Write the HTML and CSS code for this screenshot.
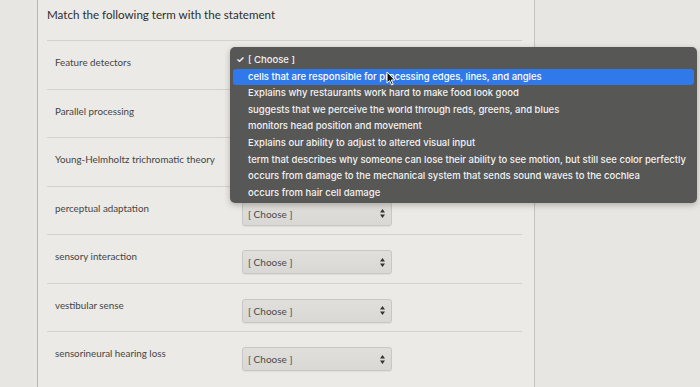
FILE: index.html
```html
<!DOCTYPE html>
<html lang="en">
<head>
  <meta charset="UTF-8" />
  <meta name="viewport" content="width=device-width, initial-scale=1.0" />
  <title>Matching question</title>
  <link rel="stylesheet" href="styles.css">
</head>
<body>
  <div class="quiz">
    <div class="question-text">Match the following term with the statement</div>

    <div class="answers">
      <div class="answer">
        <span class="term">Feature detectors</span>
        <span class="select covered">[ Choose ]</span>
      </div>
      <div class="answer">
        <span class="term">Parallel processing</span>
        <span class="select covered">[ Choose ]</span>
      </div>
      <div class="answer">
        <span class="term">Young-Helmholtz trichromatic theory</span>
        <span class="select covered">[ Choose ]</span>
      </div>
      <div class="answer">
        <span class="term">perceptual adaptation</span>
        <span class="select">[ Choose ]
          <svg class="arrows" width="5" height="9" viewBox="0 0 5 9"><path d="M2.5 0 L5 3.5 L0 3.5 Z M2.5 9 L5 5.5 L0 5.5 Z" fill="#333"/></svg>
        </span>
      </div>
      <div class="answer">
        <span class="term">sensory interaction</span>
        <span class="select">[ Choose ]
          <svg class="arrows" width="5" height="9" viewBox="0 0 5 9"><path d="M2.5 0 L5 3.5 L0 3.5 Z M2.5 9 L5 5.5 L0 5.5 Z" fill="#333"/></svg>
        </span>
      </div>
      <div class="answer">
        <span class="term">vestibular sense</span>
        <span class="select">[ Choose ]
          <svg class="arrows" width="5" height="9" viewBox="0 0 5 9"><path d="M2.5 0 L5 3.5 L0 3.5 Z M2.5 9 L5 5.5 L0 5.5 Z" fill="#333"/></svg>
        </span>
      </div>
      <div class="answer">
        <span class="term">sensorineural hearing loss</span>
        <span class="select">[ Choose ]
          <svg class="arrows" width="5" height="9" viewBox="0 0 5 9"><path d="M2.5 0 L5 3.5 L0 3.5 Z M2.5 9 L5 5.5 L0 5.5 Z" fill="#333"/></svg>
        </span>
      </div>
    </div>
  </div>

  <!-- open native dropdown for the first select -->
  <ul class="menu">
    <li class="checked"><span class="check">&#10003;</span>[ Choose ]</li>
    <li class="active">cells that are responsible for processing edges, lines, and angles</li>
    <li>Explains why restaurants work hard to make food look good</li>
    <li>suggests that we perceive the world through reds, greens, and blues</li>
    <li>monitors head position and movement</li>
    <li>Explains our ability to adjust to altered visual input</li>
    <li>term that describes why someone can lose their ability to see motion, but still see color perfectly</li>
    <li>occurs from damage to the mechanical system that sends sound waves to the cochlea</li>
    <li>occurs from hair cell damage</li>
  </ul>

  <svg class="cursor" width="10" height="15" viewBox="0 0 10 15">
    <path d="M1 1 L1 12 L3.6 9.6 L5.6 14 L7.2 13.3 L5.3 9 L8.8 9 Z" fill="#111" stroke="#fff" stroke-width="1"/>
  </svg>
</body>
</html>
```

FILE: styles.css
```css
body {
  margin: 0;
  height: 387px;
  overflow: hidden;
  background: #e7e6e2;
  font-family: Lato, 'Open Sans', sans-serif;
  color: #3a3a3a;
}
.quiz {
  margin-left: 37px;
  width: 498px;
  height: 387px;
  border-left: 1px solid #b9b8b4;
  border-right: 1px solid #c4c3bf;
  background: #ebeae6;
  padding: 0 12px 0 9px;
  box-sizing: border-box;
}
.question-text {
  height: 40px;
  padding-top: 8px;
  box-sizing: border-box;
  font-size: 11.6px;
  color: #2e2e2e;
}
.answer {
  display: flex;
  align-items: flex-start;
  height: 48.5px;
  border-top: 1px solid #d2d1cd;
  box-sizing: border-box;
  padding: 13px 0 0 8px;
}
.term {
  width: 187px;
  padding-top: 2px;
  font-size: 9.8px;
  color: #454545;
}
.select {
  display: flex;
  align-items: center;
  justify-content: space-between;
  width: 150px;
  height: 24px;
  padding: 0 6px 0 5px;
  box-sizing: border-box;
  margin-top: 2px;
  border: 1px solid #c8c7c3;
  border-radius: 3px;
  background: linear-gradient(#e0dfdb, #d9d8d4);
  box-shadow: 0 1px 1px rgba(0, 0, 0, 0.06);
  font-size: 10px;
  color: #4a4a4a;
}
.covered {
  visibility: hidden;
}
.menu {
  position: absolute;
  left: 230px;
  top: 47px;
  width: 467px;
  height: 156px;
  margin: 0;
  padding: 5px 3px 0 3px;
  box-sizing: border-box;
  list-style: none;
  background: #575756;
  border-radius: 5px;
  box-shadow: 0 2px 6px rgba(0, 0, 0, 0.25);
  font-family: Inter, 'Liberation Sans', sans-serif;
  font-size: 9.5px;
  font-weight: 500;
  color: #f2f2f2;
}
.menu li {
  height: 16.6px;
  line-height: 16.6px;
  padding-left: 15px;
  white-space: nowrap;
  border-radius: 3px;
}
.menu .checked {
  padding-left: 3px;
}
.check {
  display: inline-block;
  width: 12px;
  font-weight: 700;
}
.menu .active {
  background: #2f79ea;
  color: #fff;
}
.cursor {
  position: absolute;
  left: 386px;
  top: 71px;
}
```
